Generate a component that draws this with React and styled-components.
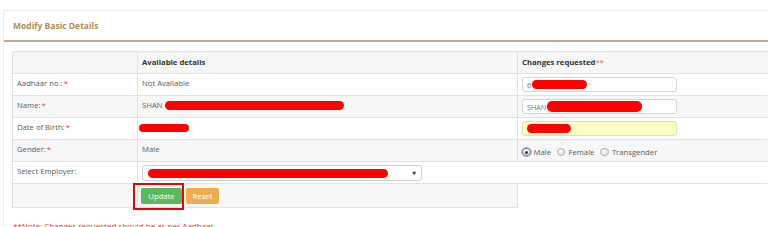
import React from 'react';
import styled, { createGlobalStyle } from 'styled-components';

const GlobalStyle = createGlobalStyle`
  html, body {
    margin: 0;
    padding: 0;
    background: #ffffff;
    overflow: hidden;
  }
  body {
    font-family: 'Open Sans', 'DejaVu Sans', sans-serif;
    font-size: 7.7px;
    color: #555555;
  }
`;

const Page = styled.div`
  padding: 10px 0 0 3px;
`;

const Panel = styled.section`
  border: 1px solid #ececec;
  border-right: none;
  border-bottom: none;
`;

const PanelHeading = styled.h3`
  margin: 0;
  height: 29px;
  padding: 0 9px;
  display: flex;
  align-items: center;
  font-size: 8.5px;
  font-weight: 700;
  color: #b08d57;
  border-bottom: 2px solid #c4ab80;
`;

const PanelBody = styled.div`
  padding: 9px 0 0 8px;
`;

const Grid = styled.div`
  display: grid;
  grid-template-columns: 126px 380px 1fr;
  grid-auto-rows: 22px;
  border-top: 1px solid #e2e2e2;
`;

const Cell = styled.div`
  position: relative;
  box-sizing: border-box;
  padding: 3px 4px 0 4px;
  line-height: 12px;
  border-right: 1px solid ${p => (p.$last ? 'transparent' : '#e2e2e2')};
  border-bottom: 1px solid #e2e2e2;
  border-left: ${p => (p.$first ? '1px solid #e2e2e2' : 'none')};
  background: ${p => (p.$striped ? '#f7f7f7' : '#ffffff')};
  grid-column: ${p => p.$span || 'auto'};
  font-weight: ${p => (p.$head ? 700 : 400)};
  color: ${p => (p.$head ? '#333333' : '#5a5a5a')};
  white-space: nowrap;
  padding-top: ${p => (p.$head ? 4 : 3)}px;
`;

const ButtonCell = styled(Cell)`
  height: 24px;
  padding: 4px 3px 0 3px;
  display: flex;
  gap: 4px;
`;

const Req = styled.span`
  color: #e53935;
  margin-left: 1px;
`;

const Soft = styled.span`
  color: #f08a8a;
`;

const Redact = styled.span`
  display: inline-block;
  vertical-align: middle;
  width: ${p => p.$w}px;
  height: ${p => p.$h || 9}px;
  margin-left: ${p => p.$ml || 0}px;
  background: #ff0000;
  border-radius: 5px;
`;

const TextBox = styled.div`
  box-sizing: border-box;
  width: 155px;
  height: 15px;
  margin-top: 0;
  padding: 0 4px;
  display: flex;
  align-items: center;
  border: 1px solid ${p => (p.$filled ? '#dfe3a8' : '#d6d6d6')};
  border-radius: 3px;
  background: ${p => (p.$filled ? '#fbfdc6' : '#ffffff')};
  color: #777777;
  font-size: 7.2px;
`;

const Select = styled.div`
  box-sizing: border-box;
  width: 280px;
  height: 16px;
  padding: 0 5px;
  display: flex;
  align-items: center;
  justify-content: space-between;
  border: 1px solid #d0d0d0;
  border-radius: 3px;
  background: #ffffff;
`;

const Arrow = styled.span`
  font-size: 5px;
  color: #444444;
`;

const RadioGroup = styled.div`
  display: flex;
  align-items: center;
  gap: 3px;
  margin-top: 3px;
`;

const RadioMark = styled.span`
  box-sizing: border-box;
  width: 8.5px;
  height: 8.5px;
  border-radius: 50%;
  border: 1px solid #b0b0b0;
  background: radial-gradient(circle at 40% 35%, #ffffff, #d8d8d8);
  position: relative;
  flex: none;
  ${p =>
    p.$checked &&
    `
    outline: 1px solid #8fb2e3;
    border-color: #7b7b7b;
    &::after {
      content: '';
      position: absolute;
      left: 1.75px;
      top: 1.75px;
      width: 3px;
      height: 3px;
      border-radius: 50%;
      background: #333333;
    }
  `}
`;

const RadioLabel = styled.span`
  margin-right: 3px;
`;

const Button = styled.span`
  display: inline-flex;
  align-items: center;
  justify-content: center;
  height: 16px;
  width: ${p => p.$w}px;
  border-radius: 2px;
  color: #ffffff;
  font-size: 7.7px;
  background: ${p => p.$bg};
`;

const Annotation = styled.span`
  position: absolute;
  left: -5px;
  top: -1px;
  width: 51px;
  height: 27px;
  box-sizing: border-box;
  border: 2px solid #ee0000;
  pointer-events: none;
`;

const Note = styled.p`
  margin: 14px 0 0 1px;
  color: #ee3333;
  font-size: 8px;
`;

export default function App() {
  return (
    <>
      <GlobalStyle />
      <Page>
        <Panel>
          <PanelHeading>Modify Basic Details</PanelHeading>
          <PanelBody>
            <Grid>
              <Cell $first $striped />
              <Cell $striped $head>Available details</Cell>
              <Cell $striped $head $last>
                Changes requested<Soft>**</Soft>
              </Cell>

              <Cell $first>
                Aadhaar no.:<Req>*</Req>
              </Cell>
              <Cell>Not Available</Cell>
              <Cell $last>
                <TextBox>
                  6<Redact $w={55} $ml={1} />
                </TextBox>
              </Cell>

              <Cell $first $striped>
                Name:<Req>*</Req>
              </Cell>
              <Cell $striped>
                SHAN<Redact $w={179} $ml={2} />
              </Cell>
              <Cell $striped $last>
                <TextBox>
                  SHAN<Redact $w={95} $ml={1} $h={11} />
                </TextBox>
              </Cell>

              <Cell $first>
                Date of Birth:<Req>*</Req>
              </Cell>
              <Cell>
                <Redact $w={50} $h={8} $ml={-3} />
              </Cell>
              <Cell $last>
                <TextBox $filled>
                  <Redact $w={44} $h={9} />
                </TextBox>
              </Cell>

              <Cell $first $striped>
                Gender:<Req>*</Req>
              </Cell>
              <Cell $striped>Male</Cell>
              <Cell $striped $last>
                <RadioGroup>
                  <RadioMark $checked />
                  <RadioLabel>Male</RadioLabel>
                  <RadioMark />
                  <RadioLabel>Female</RadioLabel>
                  <RadioMark />
                  <RadioLabel>Transgender</RadioLabel>
                </RadioGroup>
              </Cell>

              <Cell $first>Select Employer:</Cell>
              <Cell $span="span 2" $last>
                <Select>
                  <Redact $w={240} $h={9} />
                  <Arrow>▼</Arrow>
                </Select>
              </Cell>

              <Cell $first $striped style={{ height: 24 }} />
              <ButtonCell $striped>
                <Annotation />
                <Button $w={41} $bg="#5cb85c">Update</Button>
                <Button $w={33} $bg="#f0ad4e">Reset</Button>
              </ButtonCell>
            </Grid>
            <Note>**Note: Changes requested should be as per Aadhaar</Note>
          </PanelBody>
        </Panel>
      </Page>
    </>
  );
}
